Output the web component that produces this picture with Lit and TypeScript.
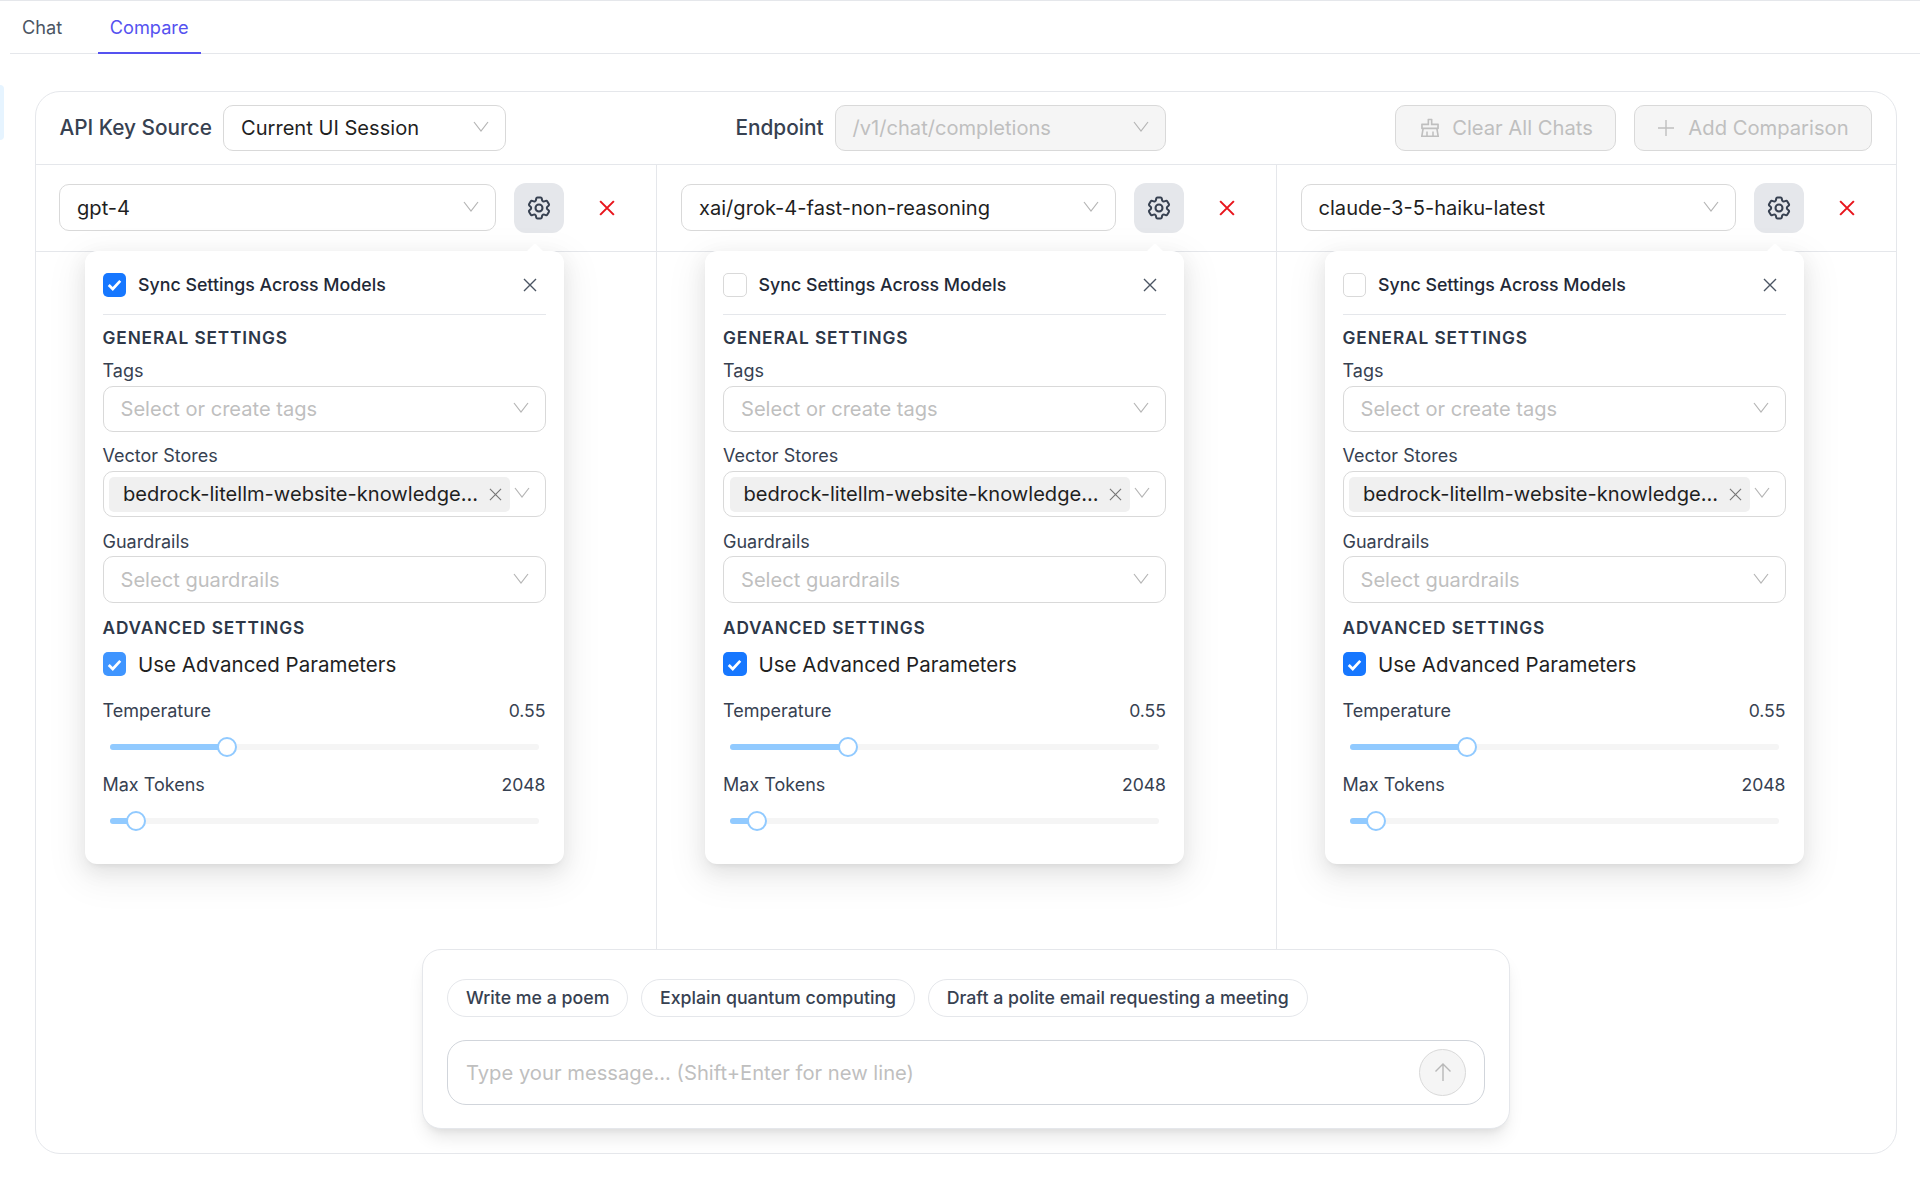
import { LitElement, css, html, svg } from 'lit';
import { customElement, property } from 'lit/decorators.js';

const chevron = html`<svg class="chev" viewBox="0 0 16 11" width="16" height="11" fill="none" stroke="currentColor" stroke-width="1.2"><path d="M1 1l7 9 7-9" /></svg>`;
const check = html`<svg viewBox="0 0 24 24" width="24" height="24" fill="none" stroke="#fff" stroke-width="2.8"><path d="M6 12.5l4.2 4.2L18 8.2" /></svg>`;
const cross = svg`<path d="M1 1l12 12M13 1L1 13" />`;

@customElement('model-panel')
export class ModelPanel extends LitElement {
  @property({ type: String }) model = '';
  @property({ type: Boolean }) synced = false;
  @property({ type: Boolean }) first = false;

  static styles = css`
    :host {
      display: block;
      min-width: 0;
      border-right: 1.5px solid #e5e7eb;
    }
    :host(:last-child) {
      border-right: 0;
    }
    .row {
      display: flex;
      align-items: center;
      height: 87px;
      padding: 0 40.5px 0 24px;
      border-bottom: 1.5px solid #e5e7eb;
      box-sizing: border-box;
    }
    :host(:first-child) .row {
      padding: 0 41.5px 0 23px;
    }
    :host(:last-child) .row {
      padding-right: 41.5px;
    }
    .select {
      display: flex;
      align-items: center;
      justify-content: space-between;
      height: 46.5px;
      box-sizing: border-box;
      padding: 0 16px 0 17px;
      border: 1.5px solid #d9d9d9;
      border-radius: 10px;
      background: #fff;
      color: #1f1f1f;
      font-size: 20.1px;
      white-space: nowrap;
    }
    .select.placeholder {
      color: #bfbfbf;
    }
    .chev {
      color: #b5b5b5;
      flex: none;
      margin-top: -3px;
    }
    .model-select {
      flex: 1;
      min-width: 0;
    }
    .gear-wrap {
      position: relative;
      flex: none;
      margin-left: 18px;
    }
    .gear {
      display: flex;
      align-items: center;
      justify-content: center;
      width: 50px;
      height: 50px;
      border-radius: 12px;
      background: #e5e7eb;
      color: #374151;
    }
    .remove {
      flex: none;
      margin-left: 35px;
      width: 16px;
      height: 16px;
      color: #e8141c;
    }
    .popover {
      position: absolute;
      z-index: 2;
      top: calc(100% + 18px);
      right: 0;
      width: 479px;
      box-sizing: border-box;
      padding: 22px 18px 33px;
      background: #fff;
      border-radius: 12px;
      box-shadow: 0 7px 20px 0 rgba(0, 0, 0, 0.08), 0 4px 7px -5px rgba(0, 0, 0, 0.12), 0 11px 34px 10px rgba(0, 0, 0, 0.05);
    }
    .popover::before {
      content: '';
      position: absolute;
      top: -5px;
      right: 22px;
      width: 14px;
      height: 14px;
      background: #fff;
      transform: rotate(45deg);
      border-radius: 2px;
    }
    .sync {
      position: relative;
      display: flex;
      align-items: center;
      padding-bottom: 17px;
      border-bottom: 1.5px solid #e5e7eb;
      font-size: 17.8px;
      font-weight: 500;
      color: #1f2937;
    }
    .close {
      position: absolute;
      right: 9px;
      top: 5px;
      width: 14px;
      height: 14px;
      color: #4b5563;
    }
    .box {
      flex: none;
      width: 23.5px;
      height: 24px;
      box-sizing: border-box;
      margin-right: 12px;
      border: 1.5px solid #d9d9d9;
      border-radius: 5px;
      background: #fff;
    }
    .box.on {
      display: flex;
      align-items: center;
      justify-content: center;
      border: 0;
      background: #1677ff;
    }
    .box.soft {
      background: #3f95ff;
    }
    .box svg {
      flex: none;
      width: 23px;
      height: 23px;
    }
    .heading {
      margin-top: 11px;
      font-size: 17.3px;
      line-height: 24px;
      font-weight: 600;
      letter-spacing: 0.05em;
      text-transform: uppercase;
      color: #2d3748;
    }
    .label {
      line-height: 24px;
      font-size: 18px;
      color: #374151;
    }
    .tags-label {
      margin-top: 9px;
      margin-bottom: 3px;
    }
    .field-label {
      margin-top: 12.3px;
      margin-bottom: 2.7px;
    }
    .chip-select {
      padding: 0 15px 0 5.5px;
      gap: 4px;
    }
    .chip {
      display: flex;
      align-items: center;
      justify-content: space-between;
      flex: 1;
      min-width: 0;
      height: 35px;
      padding: 0 8px 0 14px;
      border-radius: 5px;
      background: #f0f0f0;
      color: #1f1f1f;
    }
    .chip svg {
      flex: none;
      width: 13px;
      height: 13px;
      color: #757575;
    }
    .adv-heading {
      margin-top: 12.7px;
    }
    .use-adv {
      display: flex;
      align-items: center;
      margin-top: 12.3px;
      font-size: 20.5px;
      color: #1f1f1f;
    }
    .param {
      display: flex;
      justify-content: space-between;
    }
    .param-temp {
      margin-top: 22px;
    }
    .param-max {
      margin-top: 15.7px;
    }
    .value {
      font-size: 17.6px;
    }
    .slider {
      position: relative;
      height: 20px;
      margin: 14.3px 7px 0;
    }
    .track,
    .fill {
      position: absolute;
      top: 7px;
      left: 0;
      height: 6px;
      border-radius: 3px;
    }
    .track {
      right: 0;
      background: #f5f5f5;
    }
    .fill {
      background: #91caff;
    }
    .handle {
      position: absolute;
      top: 0;
      width: 20px;
      height: 20px;
      margin-left: -10px;
      box-sizing: border-box;
      border: 2.5px solid #91caff;
      border-radius: 50%;
      background: #fff;
    }
  `;

  #slider(pct: number) {
    return html`<div class="slider">
      <div class="track"></div>
      <div class="fill" style="width:${pct}%"></div>
      <div class="handle" style="left:${pct}%"></div>
    </div>`;
  }

  render() {
    return html`<div class="row">
      <div class="select model-select"><span>${this.model}</span>${chevron}</div>
      <div class="gear-wrap">
        <div class="gear">
          <svg viewBox="0 0 24 24" width="28" height="28" fill="none" stroke="currentColor" stroke-width="1.75" stroke-linecap="round" stroke-linejoin="round">
            <path d="M9.594 3.94c.09-.542.56-.94 1.11-.94h2.593c.55 0 1.02.398 1.11.94l.213 1.281c.063.374.313.686.645.87.074.04.147.083.22.127.325.196.72.257 1.075.124l1.217-.456a1.125 1.125 0 0 1 1.37.49l1.296 2.247a1.125 1.125 0 0 1-.26 1.431l-1.003.827c-.293.241-.438.613-.43.992a7.723 7.723 0 0 1 0 .255c-.008.378.137.75.43.991l1.004.827c.424.35.534.955.26 1.43l-1.298 2.247a1.125 1.125 0 0 1-1.369.491l-1.217-.456c-.355-.133-.75-.072-1.076.124a6.47 6.47 0 0 1-.22.128c-.331.183-.581.495-.644.869l-.213 1.281c-.09.543-.56.94-1.11.94h-2.594c-.55 0-1.019-.398-1.11-.94l-.213-1.281c-.062-.374-.312-.686-.644-.87a6.52 6.52 0 0 1-.22-.127c-.325-.196-.72-.257-1.076-.124l-1.217.456a1.125 1.125 0 0 1-1.369-.49l-1.297-2.247a1.125 1.125 0 0 1 .26-1.431l1.004-.827c.292-.24.437-.613.43-.991a6.932 6.932 0 0 1 0-.255c.007-.38-.138-.751-.43-.992l-1.004-.827a1.125 1.125 0 0 1-.26-1.43l1.297-2.247a1.125 1.125 0 0 1 1.37-.491l1.216.456c.356.133.751.072 1.076-.124.072-.044.146-.086.22-.128.332-.183.582-.495.644-.869l.214-1.28Z" />
            <path d="M15 12a3 3 0 1 1-6 0 3 3 0 0 1 6 0Z" />
          </svg>
        </div>
        <div class="popover">
          <div class="sync">
            <span class="box ${this.synced ? 'on' : ''}">${this.synced ? check : ''}</span>
            Sync Settings Across Models
            <svg class="close" viewBox="0 0 14 14" fill="none" stroke="currentColor" stroke-width="1.4">${cross}</svg>
          </div>
          <div class="heading">General Settings</div>
          <div class="label tags-label">Tags</div>
          <div class="select placeholder"><span>Select or create tags</span>${chevron}</div>
          <div class="label field-label">Vector Stores</div>
          <div class="select chip-select">
            <div class="chip">
              <span>bedrock-litellm-website-knowledge...</span>
              <svg viewBox="0 0 14 14" fill="none" stroke="currentColor" stroke-width="1.2">${cross}</svg>
            </div>
            ${chevron}
          </div>
          <div class="label field-label">Guardrails</div>
          <div class="select placeholder"><span>Select guardrails</span>${chevron}</div>
          <div class="heading adv-heading">Advanced Settings</div>
          <div class="use-adv"><span class="box on ${this.first ? 'soft' : ''}">${check}</span>Use Advanced Parameters</div>
          <div class="label param param-temp"><span>Temperature</span><span class="value">0.55</span></div>
          ${this.#slider(27.5)}
          <div class="label param param-max"><span>Max Tokens</span><span class="value">2048</span></div>
          ${this.#slider(6.2)}
        </div>
      </div>
      <svg class="remove" viewBox="0 0 14 14" fill="none" stroke="currentColor" stroke-width="1.8">${cross}</svg>
    </div>`;
  }
}

@customElement('app-root')
export class AppRoot extends LitElement {
  static styles = css`
    :host {
      display: block;
      position: relative;
      height: 100vh;
      box-sizing: border-box;
      overflow: hidden;
      border-top: 1.5px solid #e5e7eb;
      background: #fff;
      font-family: Inter, 'Liberation Sans', sans-serif;
      color: #1f1f1f;
    }
    .tabs {
      display: flex;
      gap: 23.5px;
      height: 53px;
      margin-left: 10px;
      box-sizing: border-box;
      border-bottom: 1.5px solid #e5e7eb;
    }
    .tab {
      padding: 0 12px;
      height: 53px;
      box-sizing: border-box;
      line-height: 52px;
      font-size: 18.2px;
      color: #4b5563;
    }
    .tab.active {
      color: #5552f0;
      border-bottom: 2.5px solid #5552f0;
    }
    .edge {
      position: absolute;
      left: 0;
      top: 84px;
      width: 4px;
      height: 55px;
      border-radius: 0 6px 6px 0;
      background: #e6f4ff;
    }
    .card {
      display: flex;
      flex-direction: column;
      height: 1063px;
      margin: 37px 23px 0 35px;
      box-sizing: border-box;
      border: 1.5px solid #e5e7eb;
      border-radius: 25px;
    }
    .header {
      display: flex;
      align-items: center;
      justify-content: space-between;
      height: 72.5px;
      flex: none;
      padding: 0 24px 0 23.5px;
      box-sizing: border-box;
      border-bottom: 1.5px solid #e5e7eb;
    }
    .group {
      display: flex;
      align-items: center;
      gap: 11.5px;
    }
    .group label {
      font-size: 20.8px;
      font-weight: 500;
      color: #374151;
    }
    .select {
      display: flex;
      align-items: center;
      justify-content: space-between;
      height: 46.5px;
      box-sizing: border-box;
      padding: 0 16px 0 16.5px;
      border: 1.5px solid #d9d9d9;
      border-radius: 10px;
      font-size: 20.1px;
      white-space: nowrap;
    }
    .select.disabled {
      background: #f5f5f5;
      color: #bfbfbf;
    }
    .chev {
      color: #b5b5b5;
      margin-top: -3px;
    }
    .source {
      width: 283px;
    }
    .endpoint {
      width: 331px;
    }
    .actions {
      display: flex;
      gap: 18px;
    }
    .btn {
      display: flex;
      align-items: center;
      justify-content: center;
      gap: 10px;
      height: 46.5px;
      box-sizing: border-box;
      border: 1.5px solid #d9d9d9;
      border-radius: 10px;
      background: #f5f5f5;
      color: #bfbfbf;
      font-size: 20.2px;
    }
    .btn-clear {
      width: 221px;
    }
    .btn-add {
      width: 238px;
      gap: 13px;
    }
    .columns {
      display: grid;
      grid-template-columns: 621px 1fr 1fr;
      flex: 1;
      min-height: 0;
    }
    .composer {
      flex: none;
      width: 1088px;
      height: 180px;
      margin: 0 auto 24px;
      box-sizing: border-box;
      padding: 28.5px 24px 0;
      border: 1.5px solid #e5e7eb;
      border-radius: 19px;
      background: #fff;
      box-shadow: 0 12px 18px -4px rgba(0, 0, 0, 0.1), 0 5px 7px -3px rgba(0, 0, 0, 0.06);
    }
    .chips {
      display: flex;
      gap: 12.5px;
    }
    .prompt {
      height: 38px;
      padding: 0 18px;
      box-sizing: border-box;
      border: 1.5px solid #e5e7eb;
      border-radius: 19px;
      line-height: 35px;
      font-size: 17.75px;
      font-weight: 500;
      color: #374151;
      white-space: nowrap;
    }
    .input {
      display: flex;
      align-items: center;
      justify-content: space-between;
      height: 64.5px;
      margin-top: 23.5px;
      padding: 0 18px;
      box-sizing: border-box;
      border: 1.5px solid #d1d5db;
      border-radius: 19px;
      font-size: 20.2px;
      color: #bfbfbf;
    }
    .send {
      display: flex;
      align-items: center;
      justify-content: center;
      width: 47px;
      height: 47px;
      box-sizing: border-box;
      border: 1.5px solid #d9d9d9;
      border-radius: 50%;
      background: #f5f5f5;
    }
  `;

  render() {
    return html`
      <div class="tabs">
        <div class="tab">Chat</div>
        <div class="tab active">Compare</div>
      </div>
      <div class="edge"></div>
      <div class="card">
        <div class="header">
          <div class="group">
            <label>API Key Source</label>
            <div class="select source"><span>Current UI Session</span>${chevron}</div>
          </div>
          <div class="group">
            <label>Endpoint</label>
            <div class="select endpoint disabled"><span>/v1/chat/completions</span>${chevron}</div>
          </div>
          <div class="actions">
            <div class="btn btn-clear">
              <svg viewBox="0 0 1024 1024" width="24" height="24" fill="currentColor">
                <path d="M899.1 869.6l-53-305.6H864c14.4 0 26-11.6 26-26V346c0-14.4-11.6-26-26-26H618V138c0-14.4-11.6-26-26-26H432c-14.4 0-26 11.6-26 26v182H160c-14.4 0-26 11.6-26 26v192c0 14.4 11.6 26 26 26h17.9l-53 305.6a25.95 25.95 0 0025.6 30.4h723c1.5 0 3-.1 4.4-.4a25.88 25.88 0 0021.2-30zM204 390h272V182h72v208h272v104H204V390zm468 440V674c0-4.4-3.6-8-8-8h-48c-4.4 0-8 3.6-8 8v156H416V674c0-4.4-3.6-8-8-8h-48c-4.4 0-8 3.6-8 8v156H202.8l45.1-260H776l45.1 260H672z" />
              </svg>
              Clear All Chats
            </div>
            <div class="btn btn-add">
              <svg viewBox="0 0 18 18" width="18" height="18" fill="none" stroke="currentColor" stroke-width="1.4"><path d="M9 1v16M1 9h16" /></svg>
              Add Comparison
            </div>
          </div>
        </div>
        <div class="columns">
          <model-panel model="gpt-4" synced first></model-panel>
          <model-panel model="xai/grok-4-fast-non-reasoning"></model-panel>
          <model-panel model="claude-3-5-haiku-latest"></model-panel>
        </div>
        <div class="composer">
          <div class="chips">
            <div class="prompt">Write me a poem</div>
            <div class="prompt">Explain quantum computing</div>
            <div class="prompt">Draft a polite email requesting a meeting</div>
          </div>
          <div class="input">
            <span>Type your message... (Shift+Enter for new line)</span>
            <div class="send">
              <svg viewBox="0 0 20 20" width="20" height="20" fill="none" stroke="#b8b8b8" stroke-width="1.4"><path d="M10 19V2M2.5 9.5L10 2l7.5 7.5" /></svg>
            </div>
          </div>
        </div>
      </div>
    `;
  }
}
